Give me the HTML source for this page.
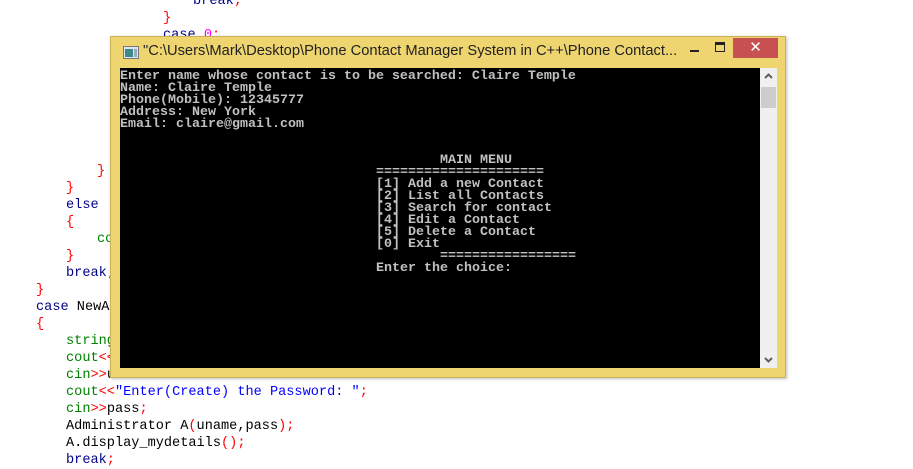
<!DOCTYPE html>
<html><head><style>
body{margin:0;width:913px;height:458px;overflow:hidden;background:#fff;position:relative;font-family:"Liberation Mono",monospace}
.c{position:absolute;font-size:13.6px;line-height:17px;white-space:pre;color:#000}
.k{color:#00008b}.g{color:#008000}.r{color:#f00}.s{color:#0000ff}.p{color:#ff00ff}
#win{position:absolute;left:110px;top:36px;width:674px;height:340px;background:#efd56f;border:1px solid #c9b35a;box-shadow:1px 1px 3px rgba(0,0,0,.25)}
#title{position:absolute;left:32px;top:6px;font-family:"Liberation Sans",sans-serif;font-size:14.7px;color:#222}
#con{position:absolute;left:9px;top:31px;width:640px;height:300px;background:#000}
#sb{position:absolute;left:649px;top:31px;width:17px;height:300px;background:#f0f0f0}
.t{position:absolute;font-family:"Liberation Mono",monospace;font-size:13.33px;line-height:12px;color:#c0c0c0;white-space:pre;font-weight:bold}
</style></head><body>
<div class="c" style="left:193px;top:-7px"><span class="k">break</span><span class="r">;</span></div>
<div class="c r" style="left:163px;top:10px">}</div>
<div class="c" style="left:163px;top:27px"><span class="k">case</span> <span class="p">0</span><span class="r">:</span></div>
<div class="c r" style="left:97px;top:163px">}</div>
<div class="c r" style="left:66px;top:180px">}</div>
<div class="c k" style="left:66px;top:197px">else</div>
<div class="c r" style="left:66px;top:214px">{</div>
<div class="c g" style="left:97px;top:231px">co</div>
<div class="c r" style="left:66px;top:248px">}</div>
<div class="c" style="left:66px;top:265px"><span class="k">break</span><span class="r">;</span></div>
<div class="c r" style="left:36px;top:282px">}</div>
<div class="c" style="left:36px;top:299px"><span class="k">case</span> NewAc</div>
<div class="c r" style="left:36px;top:316px">{</div>
<div class="c g" style="left:66px;top:333px">string</div>
<div class="c" style="left:66px;top:350px"><span class="g">cout</span><span class="r">&lt;&lt;</span></div>
<div class="c" style="left:66px;top:367px"><span class="g">cin</span><span class="r">&gt;&gt;</span>u</div>
<div class="c" style="left:66px;top:384px"><span class="g">cout</span><span class="r">&lt;&lt;</span><span class="s">"Enter(Create) the Password: "</span><span class="r">;</span></div>
<div class="c" style="left:66px;top:401px"><span class="g">cin</span><span class="r">&gt;&gt;</span>pass<span class="r">;</span></div>
<div class="c" style="left:66px;top:418px">Administrator A<span class="r">(</span>uname,pass<span class="r">);</span></div>
<div class="c" style="left:66px;top:435px">A.display_mydetails<span class="r">();</span></div>
<div class="c" style="left:66px;top:452px"><span class="k">break</span><span class="r">;</span></div>

<div id="win">
  <svg style="position:absolute;left:12px;top:9px" width="16" height="13"><rect x="0.5" y="0.5" width="15" height="12" fill="#dfe7ee" stroke="#777"/><rect x="2" y="3" width="8" height="8" fill="#3a8a8a"/><rect x="11" y="3" width="3" height="8" fill="#9ab"/></svg>
  <div id="title">"C:\Users\Mark\Desktop\Phone Contact Manager System in C++\Phone Contact...</div>
  <div style="position:absolute;left:579px;top:13px;width:9px;height:2px;background:#222"></div>
  <div style="position:absolute;left:604px;top:5px;width:8px;height:6px;border:1.5px solid #222;border-top-width:3px"></div>
  <div style="position:absolute;left:622px;top:1px;width:45px;height:20px;background:#c75050;color:#fff;font-family:'Liberation Sans',sans-serif;font-size:15px;text-align:center;line-height:20px">✕</div>
  <div id="con">
<div class="t" style="left:0;top:3px">Enter name whose contact is to be searched: Claire Temple
Name: Claire Temple
Phone(Mobile): 12345777
Address: New York
Email: claire@gmail.com</div>
<div class="t" style="left:256px;top:87px">        MAIN MENU
=====================
[1] Add a new Contact
[2] List all Contacts
[3] Search for contact
[4] Edit a Contact
[5] Delete a Contact
[0] Exit
        =================
Enter the choice:</div>
  </div>
  <div id="sb">
    <div style="position:absolute;left:1px;top:19px;width:15px;height:21px;background:#cdcdcd"></div>
    <svg style="position:absolute;left:4px;top:5px" width="9" height="6"><path d="M1 5L4.5 1.5L8 5" stroke="#606060" stroke-width="2" fill="none"/></svg>
    <svg style="position:absolute;left:4px;top:289px" width="9" height="6"><path d="M1 1L4.5 4.5L8 1" stroke="#606060" stroke-width="2" fill="none"/></svg>
  </div>
</div>
</body></html>
